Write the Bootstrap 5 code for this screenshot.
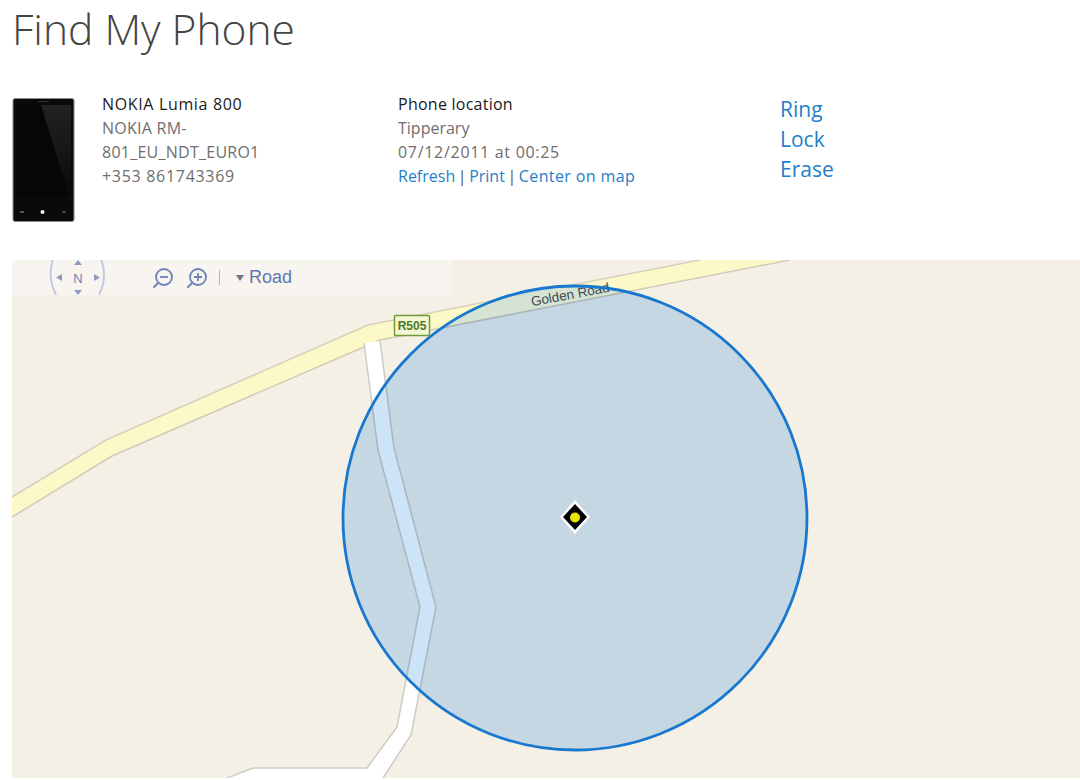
<!DOCTYPE html>
<html lang="en">
<head>
<meta charset="utf-8">
<title>Find My Phone</title>
<link href="https://cdn.jsdelivr.net/npm/bootstrap@5.3.0/dist/css/bootstrap.min.css" rel="stylesheet">
<style>
html,body{background:#fff;}
body{font-family:"Open Sans","Noto Sans",sans-serif;color:#6e6e6e;font-size:16px;line-height:24px;height:780px;overflow:hidden;}
.fm-page{padding:0 0 0 12px;}
.fm-title{font-family:"Open Sans",sans-serif;font-weight:300;font-size:42.5px;line-height:58px;color:#444;margin:0;height:92px;}
.fm-info{height:168px;}
.fm-phone{width:90px;flex:none;padding-top:6px;}
.fm-phone svg{display:block;}
.fm-device{width:296px;flex:none;}
.fm-device .fm-wrap{width:172px;letter-spacing:.25px;}
.fm-device .fm-strong{letter-spacing:.65px;}
.fm-location{width:383px;flex:none;}
.fm-location .fm-strong{letter-spacing:.25px;}
.fm-digits{letter-spacing:.7px;}
.fm-strong{color:#1a1a1a;}
.fm-link{color:#1f7fc8;text-decoration:none;}
.fm-links{word-spacing:-1.6px;}
.fm-links .fm-link:last-child{letter-spacing:.4px;word-spacing:0;}
.fm-sep{color:#555;}
.fm-actions{margin-left:-1px;padding-top:2px;}
.fm-actions .fm-link{display:block;font-size:21px;line-height:30px;}
.fm-map{position:relative;height:518px;background:#f5f0e5;overflow:hidden;}
.fm-map>svg{display:block;}
.fm-bar{position:absolute;left:0;top:0;width:440px;height:35px;background:#f8f5f1;color:#5f78b0;font-family:"Liberation Sans",sans-serif;font-size:18px;}
.fm-road{line-height:35px;}
.fm-divider{width:1px;height:15px;background:#b5b8bd;}
.fm-caret{width:0;height:0;border-left:4.5px solid transparent;border-right:4.5px solid transparent;border-top:6px solid #6d7484;}
.fm-compass{margin-left:36px;}
.fm-zoomout{margin-left:44px;}
.fm-zoomin{margin-left:12px;}
.fm-divider{margin-left:11px;}
.fm-caret{margin-left:16px;}
.fm-road{margin-left:5px;}
</style>
</head>
<body>
<div class="fm-page">
  <h1 class="fm-title">Find My Phone</h1>
  <div class="d-flex fm-info">
    <div class="fm-phone">
      <svg width="63" height="124" viewBox="0 0 63 124" aria-hidden="true">
        <defs><linearGradient id="gl" x1="0" y1="0" x2="0" y2="1"><stop offset="0" stop-color="#222"/><stop offset="1" stop-color="#0a0a0a"/></linearGradient></defs>
        <rect x="1" y="0.5" width="61" height="123" rx="2" fill="#0a0a0a" stroke="#8c8c8c" stroke-width="1"/>
        <rect x="4" y="7" width="55" height="92" fill="#060606"/>
        <polygon points="29,7 59,7 59,97 57,97" fill="url(#gl)"/>
        <rect x="26" y="3" width="11" height="1" fill="#333"/>
        <rect x="8" y="113" width="4" height="2" fill="#555"/>
        <circle cx="30.500" cy="114" r="2" fill="#eee"/>
        <rect x="50" y="113" width="4" height="2" fill="#444"/>
      </svg>
    </div>
    <div class="fm-device">
      <div class="fm-strong">NOKIA Lumia 800</div>
      <div class="fm-wrap">NOKIA RM-801_EU_NDT_EURO1</div>
      <div class="fm-digits">+353 861743369</div>
    </div>
    <div class="fm-location">
      <div class="fm-strong">Phone location</div>
      <div>Tipperary</div>
      <div class="fm-digits">07/12/2011 at 00:25</div>
      <div class="fm-links"><a class="fm-link" href="#">Refresh</a> <span class="fm-sep">|</span> <a class="fm-link" href="#">Print</a> <span class="fm-sep">|</span> <a class="fm-link" href="#">Center on map</a></div>
    </div>
    <div class="fm-actions">
      <a class="fm-link" href="#">Ring</a>
      <a class="fm-link" href="#">Lock</a>
      <a class="fm-link" href="#">Erase</a>
    </div>
  </div>
  <div class="fm-map">
    <svg width="1068" height="518" viewBox="12 260 1068 518" role="img" aria-label="Map">
      <defs>
        <clipPath id="circ"><circle cx="575" cy="518" r="232"/></clipPath>
      </defs>
      <polygon points="12,497 106,440 368,325 700,260 790,260 380,340 112,456 12,517" fill="#fdf8c8"/>
      <polyline points="12,497 106,440 368,325 700,260" fill="none" stroke="#d4d1bd" stroke-width="1.500"/>
      <polyline points="12,517 112,456 380,340 790,260" fill="none" stroke="#cfccb9" stroke-width="1.500"/>
      <polygon points="364,343 378,450 420,607 397,727 367,768 253,768 227,778 383,778 411,735 436,607 394,448 380,341" fill="#fff"/>
      <polyline points="364,343 378,450 420,607 397,727 367,768 253,768 227,778" fill="none" stroke="#cfcbc5" stroke-width="1.500"/>
      <polyline points="380,341 394,448 436,607 411,735 383,778" fill="none" stroke="#cfcbc5" stroke-width="1.500"/>
      <circle cx="575" cy="518" r="232" fill="#c6d7e4"/>
      <g clip-path="url(#circ)">
        <polygon points="368,325 700,260 790,260 380,340" fill="#d5e4d2"/>
        <polyline points="380,340 790,260" fill="none" stroke="#a9b3b5" stroke-width="1.500"/>
        <polygon points="364,343 378,450 420,607 397,727 411,735 436,607 394,448 380,341" fill="#cde3f6"/>
        <polyline points="364,343 378,450 420,607 397,727" fill="none" stroke="#a8b6c2" stroke-width="1.500"/>
        <polyline points="380,341 394,448 436,607 411,735" fill="none" stroke="#a8b6c2" stroke-width="1.500"/>
      </g>
      <text x="571" y="299" transform="rotate(-10.500 571 299)" text-anchor="middle" font-family="Liberation Sans, sans-serif" font-size="13.500" fill="#3f4a55">Golden Road</text>
      <circle cx="575" cy="518" r="232" fill="none" stroke="#1877cf" stroke-width="2.800"/>
      <rect x="394.500" y="315.500" width="35" height="20" rx="1" fill="#f4f6d8" stroke="#6f9a35" stroke-width="1.500"/>
      <text x="412" y="330" text-anchor="middle" font-family="Liberation Sans, sans-serif" font-weight="700" font-size="12" fill="#4f7a22">R505</text>
      <polygon points="575,500 590,517 575,534 560,517" fill="#fff"/>
      <polygon points="575,504 587,517 575,530 563,517" fill="#000"/>
      <circle cx="575" cy="517.500" r="5" fill="#e6e600"/>
    </svg>
    <div class="fm-bar d-flex align-items-center">
      <svg class="fm-compass" width="60" height="35" viewBox="0 0 60 35" aria-hidden="true">
        <path d="M5 -1 Q-1 17 8 35" fill="none" stroke="#c3c9de" stroke-width="2"/>
        <path d="M53 -1 Q60 17 51 35" fill="none" stroke="#c3c9de" stroke-width="2"/>
        <polygon points="30,0 34,5 26,5" fill="#8d9bc2"/>
        <polygon points="30,35 34,30 26,30" fill="#8d9bc2"/>
        <polygon points="8,17.500 14,14 14,21" fill="#8d9bc2"/>
        <polygon points="52,17.500 46,14 46,21" fill="#8d9bc2"/>
        <text x="30" y="23" text-anchor="middle" font-family="Liberation Sans, sans-serif" font-size="13" fill="#6f82b6">N</text>
      </svg>
      <svg class="fm-zoomout" width="22" height="22" viewBox="0 0 22 22" aria-hidden="true">
        <circle cx="12" cy="10" r="8" fill="none" stroke="#6b82b8" stroke-width="1.800"/>
        <path d="M6 16 L2 20" stroke="#6b82b8" stroke-width="2" stroke-linecap="round"/>
        <path d="M8 10 H16" stroke="#6b82b8" stroke-width="1.800"/>
      </svg>
      <svg class="fm-zoomin" width="22" height="22" viewBox="0 0 22 22" aria-hidden="true">
        <circle cx="12" cy="10" r="8" fill="none" stroke="#6b82b8" stroke-width="1.800"/>
        <path d="M6 16 L2 20" stroke="#6b82b8" stroke-width="2" stroke-linecap="round"/>
        <path d="M8 10 H16 M12 6 V14" stroke="#6b82b8" stroke-width="1.800"/>
      </svg>
      <span class="fm-divider"></span>
      <span class="fm-caret"></span>
      <span class="fm-road">Road</span>
    </div>
  </div>
</div>
<script src="https://cdn.jsdelivr.net/npm/bootstrap@5.3.0/dist/js/bootstrap.bundle.min.js"></script>
</body>
</html>
